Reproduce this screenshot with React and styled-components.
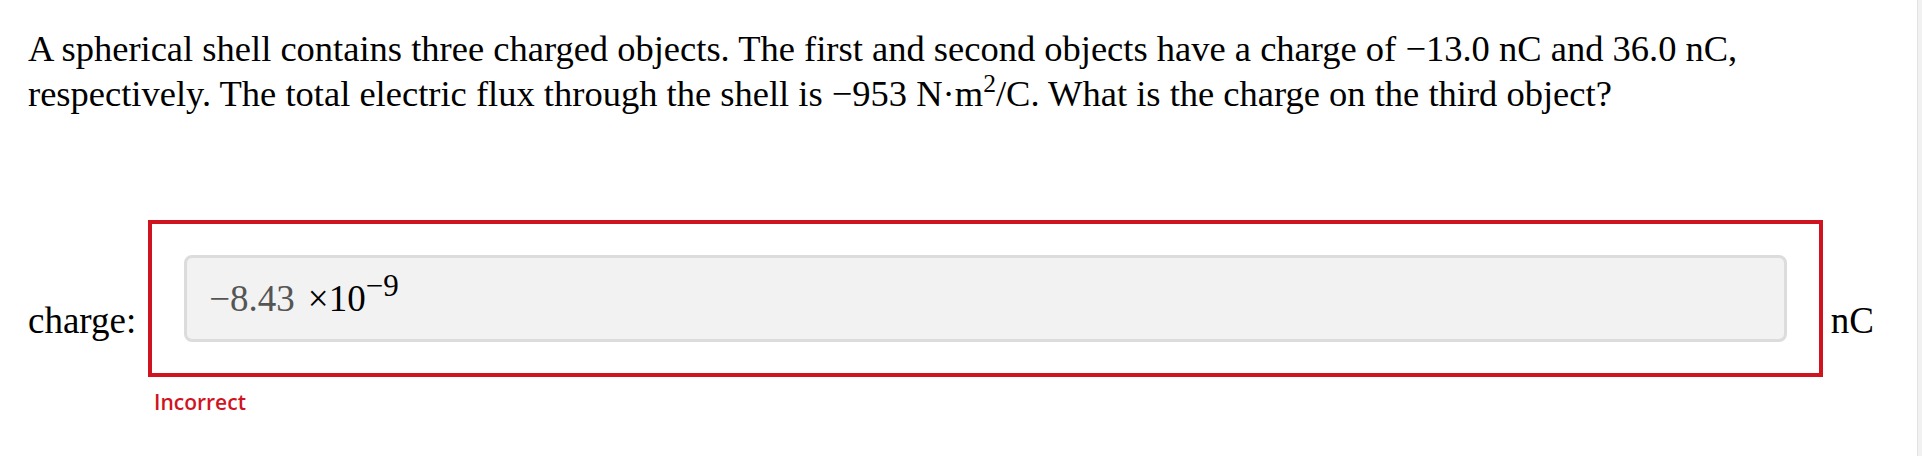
import styled, { createGlobalStyle } from "styled-components";

const GlobalStyle = createGlobalStyle`
  html, body {
    margin: 0;
    padding: 0;
    background: #ffffff;
  }

  body {
    font-family: "Liberation Serif", "Times New Roman", serif;
    color: #000000;
  }
`;

const Page = styled.div`
  display: flex;
  min-height: 456px;
  width: 100%;
  box-sizing: border-box;
`;

const Content = styled.main`
  flex: 1;
  padding: 26px 0 0 28px;
`;

const ScrollEdge = styled.div`
  width: 4px;
  background: #f1f1f1;
  border-left: 1px solid #e2e2e2;
`;

const Question = styled.p`
  margin: 0;
  max-width: 1800px;
  font-size: 36.5px;
  line-height: 45px;
`;

const Sup = styled.sup`
  font-size: ${(props) => props.size || "0.7em"};
  line-height: 0;
  vertical-align: ${(props) => props.raise || "0.55em"};
`;

const AnswerRow = styled.div`
  display: flex;
  align-items: flex-end;
  margin: 104px 43px 0 0;
`;

const Label = styled.span`
  font-size: 37px;
  line-height: 42px;
  margin: ${(props) => (props.unit ? "0 0 35px 8px" : "0 12px 35px 0")};
  white-space: nowrap;
`;

const AnswerBox = styled.div`
  flex: 1;
  border: 4px solid ${(props) => (props.wrong ? "#d0141f" : "#cccccc")};
  padding: 31px 32px;
`;

const Field = styled.div`
  display: flex;
  align-items: center;
  height: 81px;
  padding: 0 22px;
  background: #f2f2f2;
  border: 3px solid #dcdcdc;
  border-radius: 8px;
  font-size: 37px;
  line-height: 42px;
`;

const Value = styled.span`
  color: #555555;
`;

const Power = styled.span`
  color: #000000;
  margin-left: 13px;
`;

const Feedback = styled.div`
  margin: 11px 0 0 126px;
  font-family: "Open Sans", "Noto Sans", sans-serif;
  font-weight: 600;
  font-size: 21px;
  line-height: 28px;
  color: #d0141f;
`;

export default function App() {
  return (
    <>
      <GlobalStyle />
      <Page>
        <Content>
          <Question>
            A spherical shell contains three charged objects. The first and
            second objects have a charge of −13.0 nC and 36.0 nC,
            respectively. The total electric flux through the shell is −953
            N·m<Sup>2</Sup>/C. What is the charge on the third object?
          </Question>

          <AnswerRow>
            <Label>charge:</Label>
            <AnswerBox wrong>
              <Field>
                <Value>−8.43</Value>
                <Power>
                  ×10
                  <Sup size="31px" raise="15px">
                    −9
                  </Sup>
                </Power>
              </Field>
            </AnswerBox>
            <Label unit>nC</Label>
          </AnswerRow>

          <Feedback>Incorrect</Feedback>
        </Content>
        <ScrollEdge />
      </Page>
    </>
  );
}
